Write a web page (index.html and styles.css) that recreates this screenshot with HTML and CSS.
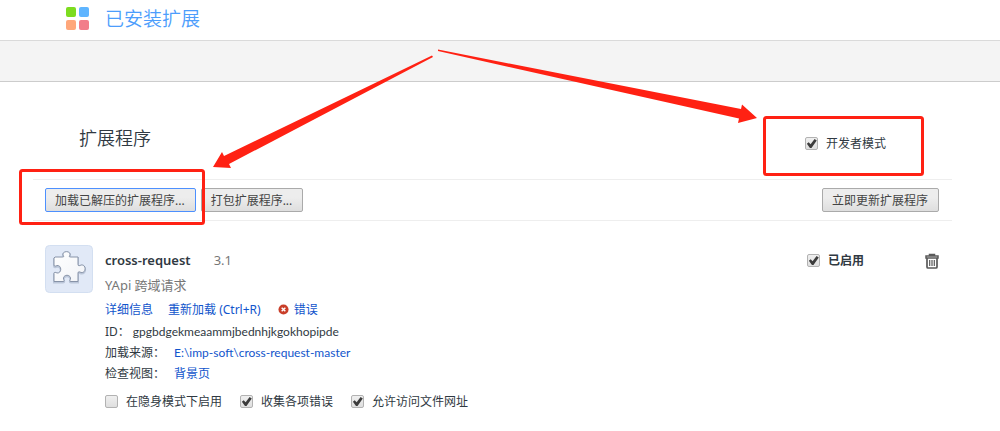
FILE: index.html
```html
<!DOCTYPE html>
<html lang="zh-CN">
<head>
<meta charset="utf-8">
<title>扩展程序</title>
<link rel="stylesheet" href="styles.css">
</head>
<body>
<header class="topbar">
  <span class="logo"><i class="green"></i><i class="blue"></i><i class="orange"></i><i class="pink"></i></span>
  <span class="topbar-title">已安装扩展</span>
</header>
<div class="band"></div>
<main class="page">
  <div class="heading">
    <h1>扩展程序</h1>
    <label class="check dev-mode"><input type="checkbox" checked>开发者模式</label>
  </div>
  <div class="toolbar">
    <button class="btn focused" type="button">加载已解压的扩展程序...</button>
    <button class="btn" type="button">打包扩展程序...</button>
    <button class="btn update" type="button">立即更新扩展程序</button>
  </div>
  <article class="extension">
    <svg class="ext-icon" viewBox="0 0 48 48" aria-hidden="true">
      <defs>
        <linearGradient id="piece" x1="0" y1="0" x2="1" y2="1"><stop offset="0" stop-color="#fff"/><stop offset="1" stop-color="#f1f3f7"/></linearGradient>
      </defs>
      <rect x=".5" y=".5" width="47" height="47" rx="4" fill="#e1e9f7" stroke="#d3dff1"/>
      <g transform="translate(-1 0)">
        <path transform="translate(0 1)" d="M11 12H18.500C20.500 12 19.500 11 19 10C18 5.500 27 5.500 26 10C25.500 11 24.500 12 26.500 12H34V19.500C34 21.500 36 20.500 37 20C42.500 19 42.500 28.500 37 27.500C36 27 34 26 34 28V36.500H27C25 36.500 26 35 26.500 34C27 29 19 29 19.500 34C20 35 21 36.500 19 36.500H10V28.500C10 26.500 12 27.500 13 28C18 28.500 18 20 13 20.500C12 21 10 22 10 20V13Z" fill="none" stroke="#bcc7da" stroke-width="2"/>
        <path d="M11 12H18.500C20.500 12 19.500 11 19 10C18 5.500 27 5.500 26 10C25.500 11 24.500 12 26.500 12H34V19.500C34 21.500 36 20.500 37 20C42.500 19 42.500 28.500 37 27.500C36 27 34 26 34 28V36.500H27C25 36.500 26 35 26.500 34C27 29 19 29 19.500 34C20 35 21 36.500 19 36.500H10V28.500C10 26.500 12 27.500 13 28C18 28.500 18 20 13 20.500C12 21 10 22 10 20V13Z" fill="url(#piece)" stroke="#8793a8"/>
      </g>
    </svg>
    <div class="info">
      <div class="name-row"><h2>cross-request</h2><span class="version">3.1</span></div>
      <p class="desc">YApi 跨域请求</p>
      <div class="links">
        <a href="#">详细信息</a>
        <a href="#">重新加载 (Ctrl+R)</a>
        <a class="error" href="#"><svg viewBox="0 0 12 12" aria-hidden="true"><circle cx="6" cy="6" r="5.500" fill="#c93e29"/><path d="M4 4L8 8M8 4L4 8" stroke="#fff" stroke-width="1.600"/></svg>错误</a>
      </div>
      <div class="detail id"><span>ID：</span><span class="value">gpgbdgekmeaammjbednhjkgokhopipde</span></div>
      <div class="detail"><span>加载来源：</span><a class="value" href="#">E:\imp-soft\cross-request-master</a></div>
      <div class="detail"><span>检查视图：</span><a href="#">背景页</a></div>
      <div class="options">
        <label class="check"><input type="checkbox">在隐身模式下启用</label>
        <label class="check"><input type="checkbox" checked>收集各项错误</label>
        <label class="check"><input type="checkbox" checked>允许访问文件网址</label>
      </div>
    </div>
    <div class="state">
      <label class="check enabled"><input type="checkbox" checked>已启用</label>
      <button class="trash" type="button" aria-label="删除"><svg viewBox="0 0 14 16" aria-hidden="true"><path d="M4.500 2.500V1.500H9.500V2.500M1 5V3H13V5Z" fill="none" stroke="#5a5a5a" stroke-width="1.500"/><path d="M2 5V14Q2 15 3 15H11Q12 15 12 14V5" fill="none" stroke="#5a5a5a" stroke-width="1.700"/><path d="M4.700 7V13M7 7V13M9.300 7V13" stroke="#5a5a5a" stroke-width="1.200"/></svg></button>
    </div>
  </article>
</main>
<svg class="annotations" width="1000" height="431" viewBox="0 0 1000 431" aria-hidden="true">
  <g fill="none" stroke="#ff2113" stroke-width="3">
    <rect x="20.500" y="170.500" width="183" height="53" rx="2"/>
    <rect x="764.500" y="117.500" width="158" height="57" rx="2"/>
  </g>
  <g fill="#ff2113">
    <path d="M432 55.500L433 57L229 164L231 168L213 167L222 152L224 156Z"/>
    <path d="M438 49.500L741 109L742 104.500L757 118L738 123L739 118.500L438 51Z"/>
  </g>
</svg>
</body>
</html>
```
FILE: styles.css
```css
* { box-sizing: border-box; }
body {
  margin: 0;
  position: relative;
  background: #fff;
  color: #303942;
  font: 12px/21px "Noto Sans", "Noto Sans CJK SC", sans-serif;
}
h1, h2, p { margin: 0; font-weight: 400; }
a { color: #1155cc; text-decoration: none; }

.topbar {
  display: flex;
  align-items: center;
  gap: 16px;
  height: 41px;
  padding: 0 66px 3px;
  border-bottom: 1px solid #dadada;
}
.logo { display: grid; grid-template-columns: 10px 10px; gap: 3px; }
.logo i { height: 10px; border-radius: 2px; }
.green { background: #7ddc1f; }
.blue { background: #5fb5ff; }
.orange { background: #ffa77a; }
.pink { background: #f27d8a; }
.topbar-title { padding-top: 2px; color: #4c9dfc; font-size: 19px; font-weight: 350; }
.band { height: 41px; background: #f4f4f4; border-bottom: 1px solid #ccc; }

.page { margin: 0 48px 0 33px; }
.heading {
  display: flex;
  justify-content: space-between;
  align-items: center;
  height: 98px;
  padding: 14px 66px 0 46px;
  border-bottom: 1px solid #eee;
}
h1 { font-size: 18px; font-weight: 350; line-height: 24px; }
.dev-mode { padding-top: 12px; }

.toolbar {
  display: flex;
  align-items: center;
  gap: 5px;
  padding: 8px 13px 8px 12px;
  border-bottom: 1px solid #eee;
}
.btn {
  height: 24px;
  padding: 1px 10px 0 9px;
  border: 1px solid #aaa;
  border-radius: 2px;
  background: linear-gradient(#ededed 38%, #dedede);
  color: #444;
  font: inherit;
  line-height: 22px;
  white-space: nowrap;
}
.focused { border-color: #4d90fe; }
.update { margin-left: auto; }

.check { display: flex; align-items: center; gap: 8px; white-space: nowrap; }
.check input {
  appearance: none;
  width: 13px;
  height: 13px;
  margin: 0;
  border: 1px solid #b2b2b2;
  border-radius: 2px;
  background: linear-gradient(#efefef, #dfdfdf);
  display: grid;
  place-items: center;
}
.check input:checked::before {
  content: "";
  width: 11px;
  height: 11px;
  background: #3c3c3c;
  clip-path: polygon(8% 52%, 24% 38%, 42% 56%, 78% 8%, 98% 22%, 50% 92%, 36% 92%);
}

.extension { display: flex; gap: 12px; padding: 24px 13px 19px 12px; }
.ext-icon { width: 48px; height: 48px; flex: none; }
.info { flex: 1; padding-top: 3px; }
.name-row { display: flex; gap: 23px; line-height: 24px; font-size: 13px; }
h2 { font-size: 13px; font-weight: 600; }
.version, .desc { color: #777; }
.desc { font-size: 13px; line-height: 26px; }
.links { display: flex; gap: 15px; line-height: 23px; }
.error { display: flex; align-items: center; gap: 5px; margin-left: 2px; }
.error svg { width: 11px; height: 11px; }
.detail { display: flex; gap: 9px; }
.id { gap: 3px; }
.value { font-family: Lato, "Noto Sans", sans-serif; }
.options { display: flex; gap: 18px; margin-top: 7px; }

.state { display: flex; align-items: flex-start; gap: 61px; padding-top: 5px; }
.enabled { font-weight: 600; }
.trash { padding: 0; border: 0; background: none; height: 21px; display: flex; align-items: center; }
.trash svg { width: 14px; height: 16px; }

.annotations { position: absolute; left: 0; top: 0; pointer-events: none; }
```
